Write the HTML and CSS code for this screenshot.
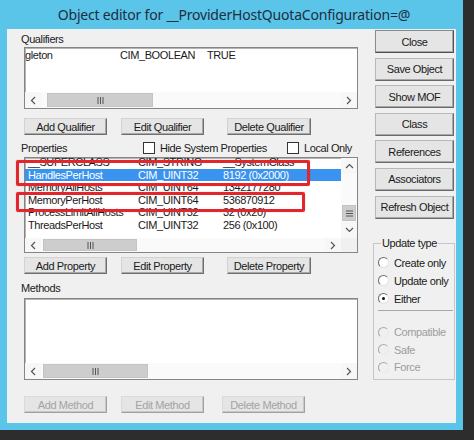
FILE: index.html
```html
<!DOCTYPE html>
<html lang="en">
<head>
    <meta charset="UTF-8">
    <title>Object editor</title>
    <link rel="stylesheet" href="styles.css">
</head>
<body>
    <div class="window">
        <div class="titlebar">Object editor for __ProviderHostQuotaConfiguration=@</div>
        <div class="client">
            <div class="left">
                <div class="label">Qualifiers</div>
                <div class="listbox qual-box">
                    <div class="list-area qual-area">
                        <div class="row qual-row"><span>gleton</span><span>CIM_BOOLEAN</span><span>TRUE</span></div>
                    </div>
                    <div class="hscroll">
                        <div class="sb-btn"><svg width="6" height="9" viewBox="0 0 6 9"><polyline points="5,1 1.5,4.5 5,8" fill="none" stroke="#555" stroke-width="1.2"/></svg></div>
                        <div class="sb-track"><div class="h-thumb qual-thumb"><svg width="7" height="7" viewBox="0 0 7 7"><path d="M1 0v7M3.5 0v7M6 0v7" stroke="#555" stroke-width="1"/></svg></div></div>
                        <div class="sb-btn"><svg width="6" height="9" viewBox="0 0 6 9"><polyline points="1,1 4.5,4.5 1,8" fill="none" stroke="#555" stroke-width="1.2"/></svg></div>
                    </div>
                </div>
                <div class="btn-row">
                    <div class="btn">Add Qualifier</div>
                    <div class="btn gap-a">Edit Qualifier</div>
                    <div class="btn gap-b">Delete Qualifier</div>
                </div>

                <div class="props-head">
                    <div class="head-label">Properties</div>
                    <div class="check check-hide"><span class="box"></span>Hide System Properties</div>
                    <div class="check"><span class="box"></span>Local Only</div>
                </div>
                <div class="listbox props-box">
                    <div class="list-main">
                        <div class="list-area props-area">
                            <div class="rows">
                                <div class="row prop-row"><span>__SUPERCLASS</span><span>CIM_STRING</span><span>__SystemClass</span></div>
                                <div class="row prop-row selected"><span>HandlesPerHost</span><span>CIM_UINT32</span><span>8192 (0x2000)</span></div>
                                <div class="row prop-row"><span>MemoryAllHosts</span><span>CIM_UINT64</span><span>1342177280</span></div>
                                <div class="row prop-row"><span>MemoryPerHost</span><span>CIM_UINT64</span><span>536870912</span></div>
                                <div class="row prop-row"><span>ProcessLimitAllHosts</span><span>CIM_UINT32</span><span>32 (0x20)</span></div>
                                <div class="row prop-row"><span>ThreadsPerHost</span><span>CIM_UINT32</span><span>256 (0x100)</span></div>
                            </div>
                        </div>
                        <div class="vscroll">
                            <div class="v-btn"><svg width="9" height="6" viewBox="0 0 9 6"><polyline points="1,5 4.5,1.5 8,5" fill="none" stroke="#555" stroke-width="1.2"/></svg></div>
                            <div class="v-track"><div class="v-thumb"><svg width="7" height="7" viewBox="0 0 7 7"><path d="M0 1h7M0 3.5h7M0 6h7" stroke="#555" stroke-width="1"/></svg></div></div>
                            <div class="v-btn"><svg width="9" height="6" viewBox="0 0 9 6"><polyline points="1,1 4.5,4.5 8,1" fill="none" stroke="#555" stroke-width="1.2"/></svg></div>
                        </div>
                    </div>
                    <div class="hscroll-row">
                        <div class="hscroll">
                            <div class="sb-btn"><svg width="6" height="9" viewBox="0 0 6 9"><polyline points="5,1 1.5,4.5 5,8" fill="none" stroke="#555" stroke-width="1.2"/></svg></div>
                            <div class="sb-track"><div class="h-thumb props-thumb"><svg width="7" height="7" viewBox="0 0 7 7"><path d="M1 0v7M3.5 0v7M6 0v7" stroke="#555" stroke-width="1"/></svg></div></div>
                            <div class="sb-btn"><svg width="6" height="9" viewBox="0 0 6 9"><polyline points="1,1 4.5,4.5 1,8" fill="none" stroke="#555" stroke-width="1.2"/></svg></div>
                        </div>
                        <div class="corner"></div>
                    </div>
                </div>
                <div class="btn-row props-btns">
                    <div class="btn">Add Property</div>
                    <div class="btn gap-a">Edit Property</div>
                    <div class="btn gap-b">Delete Property</div>
                </div>

                <div class="label methods-label">Methods</div>
                <div class="listbox methods-box">
                    <div class="list-area methods-area"></div>
                    <div class="hscroll">
                        <div class="sb-btn"><svg width="6" height="9" viewBox="0 0 6 9"><polyline points="5,1 1.5,4.5 5,8" fill="none" stroke="#555" stroke-width="1.2"/></svg></div>
                        <div class="sb-track"><div class="h-thumb methods-thumb"><svg width="7" height="7" viewBox="0 0 7 7"><path d="M1 0v7M3.5 0v7M6 0v7" stroke="#555" stroke-width="1"/></svg></div></div>
                        <div class="sb-btn"><svg width="6" height="9" viewBox="0 0 6 9"><polyline points="1,1 4.5,4.5 1,8" fill="none" stroke="#555" stroke-width="1.2"/></svg></div>
                    </div>
                </div>
                <div class="btn-row methods-btns">
                    <div class="btn disabled">Add Method</div>
                    <div class="btn disabled gap-a">Edit Method</div>
                    <div class="btn disabled gap-c">Delete Method</div>
                </div>
            </div>

            <div class="right">
                <div class="rbtns">
                    <div class="btn rbtn default">Close</div>
                    <div class="btn rbtn">Save Object</div>
                    <div class="btn rbtn">Show MOF</div>
                    <div class="btn rbtn">Class</div>
                    <div class="btn rbtn">References</div>
                    <div class="btn rbtn">Associators</div>
                    <div class="btn rbtn">Refresh Object</div>
                </div>
                <div class="groupbox">
                    <div class="group-label">Update type</div>
                    <div class="radio-row"><span class="radio"></span>Create only</div>
                    <div class="radio-row"><span class="radio"></span>Update only</div>
                    <div class="radio-row"><span class="radio checked"></span>Either</div>
                    <div class="separator"></div>
                    <div class="radio-row off"><span class="radio"></span>Compatible</div>
                    <div class="radio-row off"><span class="radio"></span>Safe</div>
                    <div class="radio-row off"><span class="radio"></span>Force</div>
                </div>
            </div>
        </div>

        <!-- red annotation frames -->
        <div class="mark mark-1"></div>
        <div class="mark mark-2"></div>
    </div>
</body>
</html>
```

FILE: styles.css
```css
* {
    margin: 0;
    padding: 0;
    box-sizing: border-box;
}

body {
    width: 474px;
    height: 440px;
    overflow: hidden;
    background-color: #2d2d2d;
    font-family: "Liberation Sans", Arial, sans-serif;
    font-size: 11px;
    letter-spacing: -0.4px;
    color: #1a1a1a;
}

.window {
    position: relative;
    width: 463px;
    height: 430px;
    background-color: #5bc4e9;
    padding: 0 7px 7px 7px;
    display: flex;
    flex-direction: column;
}

.titlebar {
    height: 29px;
    line-height: 30px;
    padding-left: 5px;
    text-align: center;
    font-family: "Noto Sans", "Open Sans", sans-serif;
    font-size: 14px;
    letter-spacing: -0.2px;
    color: #1b2f40;
    white-space: nowrap;
}

.client {
    flex: 1;
    background-color: #f0f0f0;
    display: flex;
    padding-left: 17px;
}

.left {
    width: 334px;
    padding-top: 4px;
    display: flex;
    flex-direction: column;
}

.right {
    width: 82px;
    margin-left: 15px;
    padding-top: 1px;
    display: flex;
    flex-direction: column;
}

.label {
    height: 13px;
    line-height: 13px;
    margin-left: -3px;
    color: #222;
}

.methods-label {
    margin-top: 8px;
}

/* list boxes */
.listbox {
    background-color: #fff;
    border: 1px solid #858585;
    box-shadow: inset 1px 1px #b4b4b4;
    display: flex;
    flex-direction: column;
}

.qual-box {
    margin-top: 1px;
    height: 62px;
}

.list-area {
    overflow: hidden;
}

.qual-area {
    height: 44px;
}

.row {
    display: grid;
    height: 12.5px;
    line-height: 12.5px;
    white-space: nowrap;
    overflow: hidden;
}

.qual-row {
    margin-top: 1px;
    grid-template-columns: 95px 87px 1fr;
}

.props-box {
    margin-top: 2px;
    height: 96px;
}

.list-main {
    display: flex;
    height: 80px;
}

.props-area {
    flex: 1;
}

.rows {
    margin-top: -2px;
}

.prop-row {
    padding-left: 3px;
    grid-template-columns: 110px 85px 1fr;
}

.prop-row.selected {
    background-color: #3a93ee;
    color: #fff;
}

.methods-area {
    height: 64px;
}

.methods-box {
    margin-top: 3px;
    height: 82px;
}

/* scroll bars */
.hscroll {
    display: flex;
    height: 16px;
    background-color: #fafafa;
}

.hscroll-row {
    display: flex;
    height: 14px;
}

.hscroll-row .hscroll {
    flex: 1;
    height: 14px;
}

.corner {
    width: 16px;
    background-color: #f0f0f0;
}

.sb-btn {
    flex-shrink: 0;
    width: 16px;
    display: flex;
    align-items: center;
    justify-content: center;
    background-color: #f7f7f7;
}

.sb-track {
    flex: 1;
    display: flex;
    padding: 1px 0;
}

.h-thumb {
    display: flex;
    align-items: center;
    justify-content: center;
    background-color: #cdcdcd;
    border: 1px solid #c3c3c3;
}

.qual-thumb {
    margin-left: 6px;
    width: 106px;
}

.props-thumb {
    margin-left: 2px;
    width: 94px;
}

.methods-thumb {
    margin-left: 2px;
    width: 105px;
}

.vscroll {
    width: 16px;
    height: 80px;
    display: grid;
    grid-template-rows: 16px 48px 16px;
    background-color: #fafafa;
}

.v-btn {
    display: flex;
    align-items: center;
    justify-content: center;
    background-color: #f7f7f7;
}

.v-track {
    padding: 0 1px;
}

.v-thumb {
    margin-top: 31px;
    height: 16px;
    display: flex;
    align-items: center;
    justify-content: center;
    background-color: #cdcdcd;
    border: 1px solid #c3c3c3;
}

/* buttons */
.btn-row {
    display: flex;
    height: 17px;
    margin-top: 9px;
}

.props-btns {
    margin-top: 4px;
}

.methods-btns {
    margin-top: 16px;
}

.btn {
    width: 83px;
    display: flex;
    align-items: center;
    justify-content: center;
    white-space: nowrap;
    background-color: #e5e5e5;
    border: 1px solid;
    border-color: #d2d2d2 #6e6e6e #6e6e6e #d2d2d2;
    box-shadow: inset -1px -1px #a8a8a8;
    color: #1a1a1a;
}

.btn.gap-a {
    margin-left: 14px;
}

.btn.gap-b {
    margin-left: 23px;
    width: 84px;
}

.btn.gap-c {
    margin-left: 18px;
}

.btn.disabled {
    color: #a3a3a3;
    border-color: #dadada #a0a0a0 #a0a0a0 #dadada;
    box-shadow: inset -1px -1px #c8c8c8;
}

.rbtns {
    display: flex;
    flex-direction: column;
    gap: 4.6px;
    padding: 0 1px 0 2px;
}

.rbtn {
    width: auto;
    height: 23px;
    border-color: #b8b8b8 #6a6a6a #6a6a6a #b8b8b8;
}

.rbtn.default {
    border-color: #8a8a8a #505050 #505050 #8a8a8a;
}

/* properties header */
.props-head {
    display: flex;
    align-items: center;
    height: 14px;
    margin-top: 6px;
}

.head-label {
    width: 122px;
    margin-left: -3px;
    color: #222;
}

.check {
    display: flex;
    align-items: center;
    white-space: nowrap;
}

.check-hide {
    width: 144px;
}

.check .box {
    width: 12px;
    height: 12px;
    margin-right: 5px;
    background-color: #fff;
    border: 1px solid #333;
}

/* update type */
.groupbox {
    position: relative;
    margin-top: 24.4px;
    height: 137px;
    border: 1px solid #c6c6c6;
    padding: 10px 1px 0 4px;
}

.group-label {
    position: absolute;
    top: -7px;
    left: 7px;
    padding: 0 1px;
    line-height: 13px;
    background-color: #f0f0f0;
}

.radio-row {
    display: flex;
    align-items: center;
    height: 18px;
    white-space: nowrap;
}

.radio-row.off {
    height: 17.5px;
    color: #9d9d9d;
}

.radio {
    position: relative;
    width: 11px;
    height: 11px;
    margin-right: 5px;
    border-radius: 50%;
    background-color: #fff;
    border: 1px solid;
    border-color: #6a6a6a #e2e2e2 #e2e2e2 #6a6a6a;
}

.radio.checked::after {
    content: '';
    position: absolute;
    left: 3px;
    top: 3px;
    width: 3px;
    height: 3px;
    border-radius: 50%;
    background-color: #111;
}

.radio-row.off .radio {
    background-color: #f0f0f0;
    border-color: #a8a8a8 #eaeaea #eaeaea #a8a8a8;
}

.separator {
    height: 1px;
    width: 75px;
    margin: 2px 0 12.5px 0;
    background-color: #a8a8a8;
}

/* annotation frames over the list */
.mark {
    position: absolute;
    border: 3px solid #e2262c;
    border-radius: 2px;
    box-shadow: 0 0 1px rgba(200, 0, 0, 0.6);
}

.mark-1 {
    left: 16px;
    top: 160px;
    width: 294px;
    height: 26px;
}

.mark-2 {
    left: 16px;
    top: 192px;
    width: 289px;
    height: 20px;
}
```
